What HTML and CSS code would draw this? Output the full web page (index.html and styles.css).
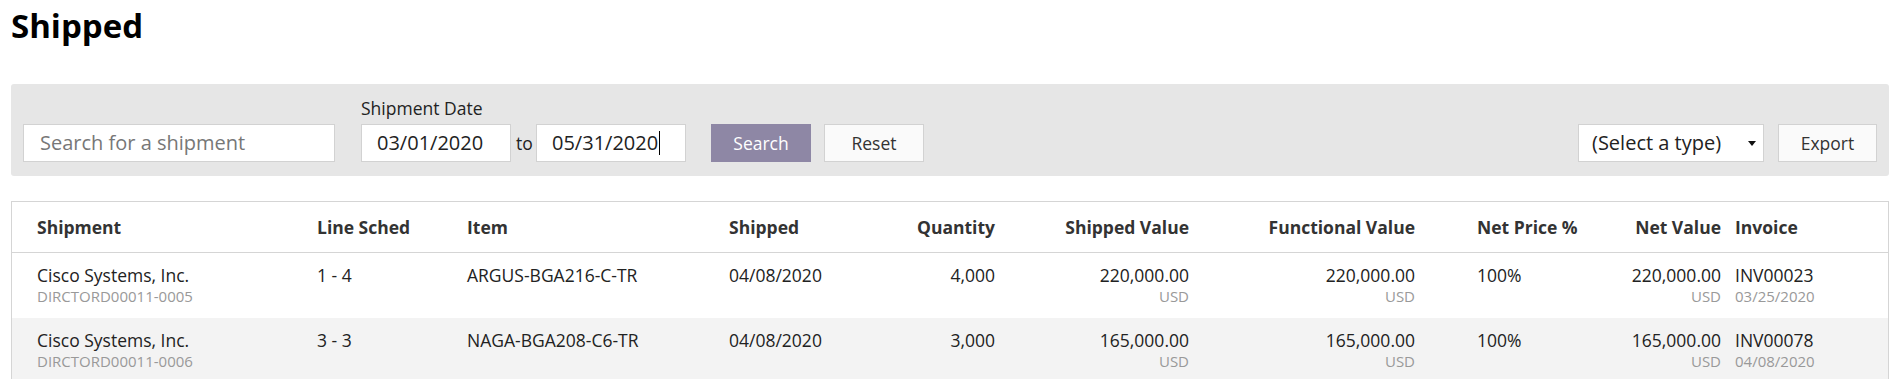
FILE: index.html
```html
<!DOCTYPE html>
<html lang="en">
<head>
<meta charset="utf-8">
<title>Shipped</title>
<link rel="stylesheet" href="styles.css">
</head>
<body>
<div class="page">
  <h1 class="title">Shipped</h1>

  <div class="filters">
    <div class="field search-field"><span class="placeholder">Search for a shipment</span></div>
    <div class="date-group">
      <div class="label">Shipment Date</div>
      <div class="date-row">
        <div class="field date-field">03/01/2020</div>
        <span class="to">to</span>
        <div class="field date-field">05/31/2020<span class="caret"></span></div>
      </div>
    </div>
    <button class="btn btn-primary">Search</button>
    <button class="btn btn-reset">Reset</button>
    <div class="spacer"></div>
    <div class="field select-field">(Select a type)<span class="arrow"></span></div>
    <button class="btn btn-export">Export</button>
  </div>

  <div class="table">
    <div class="row head">
      <div class="cell">Shipment</div>
      <div class="cell">Line Sched</div>
      <div class="cell">Item</div>
      <div class="cell">Shipped</div>
      <div class="cell right">Quantity</div>
      <div class="cell right">Shipped Value</div>
      <div class="cell right">Functional Value</div>
      <div class="cell pct">Net Price %</div>
      <div class="cell right">Net Value</div>
      <div class="cell inv">Invoice</div>
    </div>
    <div class="row body">
      <div class="cell"><div class="main">Cisco Systems, Inc.</div><div class="sub">DIRCTORD00011-0005</div></div>
      <div class="cell"><div class="main">1 - 4</div></div>
      <div class="cell"><div class="main">ARGUS-BGA216-C-TR</div></div>
      <div class="cell"><div class="main">04/08/2020</div></div>
      <div class="cell right"><div class="main">4,000</div></div>
      <div class="cell right"><div class="main">220,000.00</div><div class="sub">USD</div></div>
      <div class="cell right"><div class="main">220,000.00</div><div class="sub">USD</div></div>
      <div class="cell pct"><div class="main">100%</div></div>
      <div class="cell right"><div class="main">220,000.00</div><div class="sub">USD</div></div>
      <div class="cell inv"><div class="main">INV00023</div><div class="sub">03/25/2020</div></div>
    </div>
    <div class="row body alt">
      <div class="cell"><div class="main">Cisco Systems, Inc.</div><div class="sub">DIRCTORD00011-0006</div></div>
      <div class="cell"><div class="main">3 - 3</div></div>
      <div class="cell"><div class="main">NAGA-BGA208-C6-TR</div></div>
      <div class="cell"><div class="main">04/08/2020</div></div>
      <div class="cell right"><div class="main">3,000</div></div>
      <div class="cell right"><div class="main">165,000.00</div><div class="sub">USD</div></div>
      <div class="cell right"><div class="main">165,000.00</div><div class="sub">USD</div></div>
      <div class="cell pct"><div class="main">100%</div></div>
      <div class="cell right"><div class="main">165,000.00</div><div class="sub">USD</div></div>
      <div class="cell inv"><div class="main">INV00078</div><div class="sub">04/08/2020</div></div>
    </div>
  </div>
</div>
</body>
</html>
```

FILE: styles.css
```css
* { box-sizing: border-box; }

html, body {
  margin: 0;
  padding: 0;
  background: #fff;
  font-family: "Open Sans", "Liberation Sans", sans-serif;
  color: #222;
  overflow: hidden;
}

.page {
  padding: 4px 9px 0 11px;
}

.title {
  margin: 0 0 36px 0;
  font-size: 33px;
  line-height: 44px;
  font-weight: 700;
  color: #000;
}

.filters {
  display: flex;
  align-items: flex-end;
  background: #e6e6e6;
  border-radius: 3px;
  padding: 12px 12px 14px 12px;
}

.field {
  height: 38px;
  background: #fff;
  border: 1px solid #d2d2d2;
  font-size: 20px;
  line-height: 36px;
  color: #222;
  white-space: nowrap;
}

.search-field {
  width: 312px;
  padding-left: 16px;
}

.placeholder { color: #777; }

.date-group {
  margin-left: 26px;
  display: flex;
  flex-direction: column;
}

.label {
  font-size: 17.5px;
  line-height: 24px;
  color: #222;
  margin-bottom: 4px;
}

.date-row {
  display: flex;
  align-items: center;
}

.date-field {
  width: 150px;
  padding-left: 15px;
}

.to {
  font-size: 17.5px;
  color: #222;
  width: 25px;
  padding-left: 5px;
}

.caret {
  display: inline-block;
  width: 1px;
  height: 24px;
  background: #000;
  vertical-align: -5px;
  margin-left: 1px;
}

.btn {
  height: 38px;
  width: 100px;
  font-family: "Open Sans", "Liberation Sans", sans-serif;
  font-size: 17.5px;
  line-height: 36px;
  padding: 0;
  border: 1px solid #d2d2d2;
  background: #fafafa;
  color: #333;
  border-radius: 0;
}

.btn-primary {
  margin-left: 25px;
  background: #8e87a5;
  border-color: #8e87a5;
  color: #fff;
}

.btn-reset {
  margin-left: 13px;
}

.spacer { flex: 1; }

.select-field {
  width: 186px;
  padding-left: 13px;
  position: relative;
}

.arrow {
  position: absolute;
  right: 7px;
  top: 16px;
  width: 0;
  height: 0;
  border-left: 4.5px solid transparent;
  border-right: 4.5px solid transparent;
  border-top: 5px solid #111;
}

.btn-export {
  margin-left: 14px;
  width: 99px;
}

.table {
  margin-top: 25px;
  border: 1px solid #d5d5d5;
  border-bottom: none;
}

.row {
  display: grid;
  grid-template-columns: 280px 150px 262px 146px 120px 194px 226px 185px 121px 1fr;
  padding-left: 25px;
}

.head {
  height: 51px;
  align-items: center;
  border-bottom: 1px solid #d5d5d5;
  font-size: 17.5px;
  font-weight: 700;
  color: #333;
  line-height: 24px;
}

.body {
  height: 65px;
  padding-top: 11px;
  align-items: start;
}

.alt { background: #f3f3f3; }

.cell { white-space: nowrap; }
.right { text-align: right; }
.pct { padding-left: 62px; }
.inv { padding-left: 14px; }

.main {
  font-size: 17.5px;
  line-height: 22px;
  color: #222;
}

.sub {
  font-size: 15px;
  line-height: 21px;
  color: #999;
}
```
